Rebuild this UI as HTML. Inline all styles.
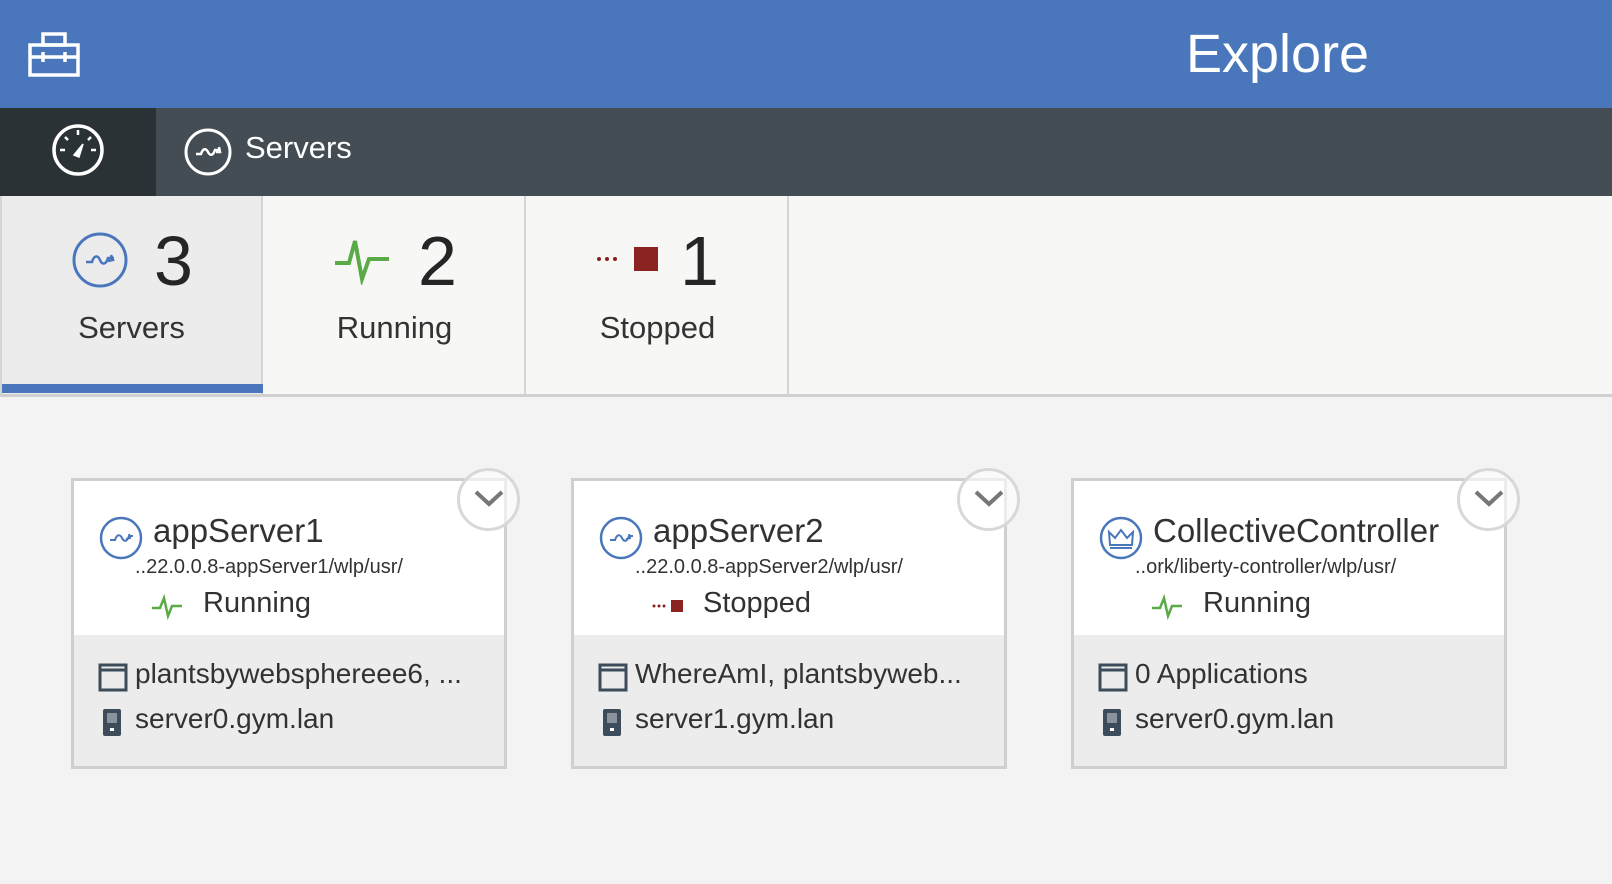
<!DOCTYPE html>
<html><head><meta charset="utf-8"><style>
*{margin:0;padding:0;box-sizing:border-box}
body{width:1612px;height:884px;overflow:hidden;background:#f3f3f3;font-family:"Liberation Sans",sans-serif;color:#323232;position:relative}
.abs{position:absolute}
.hdr{left:0;top:0;width:1612px;height:108px;background:#4a77bb}
.nav{left:0;top:108px;width:1612px;height:88px;background:#434d53}
.navl{left:0;top:108px;width:156px;height:88px;background:#2b3236}
.tabs{left:0;top:196px;width:1612px;height:201px;background:#f7f7f5;border-bottom:3px solid #d0d0d0}
.tab{top:196px;height:198px;width:263px;border-right:2px solid #d5d5d5}
.num{font-size:70px;line-height:1;color:#252525}
.lbl{font-size:31px;width:263px;text-align:center;color:#333}
.card{width:436px;height:291px;border:3px solid #cfcfcf;background:#ececec}
.card .top{position:absolute;left:0;top:0;width:430px;height:154px;background:#fff}
.t{position:absolute;white-space:nowrap}
</style></head><body>
<div class="abs hdr"></div>
<svg class="abs" style="left:28px;top:32px" width="52" height="45" viewBox="0 0 52 45" fill="none" stroke="#fff" stroke-width="3.5"><rect x="2" y="13" width="48" height="30"/><rect x="15" y="2" width="22" height="11"/><line x1="2" y1="25" x2="50" y2="25"/><line x1="15" y1="20" x2="15" y2="30"/><line x1="37" y1="20" x2="37" y2="30"/></svg>
<div class="t" style="left:1186px;top:25px;font-size:54px;color:#fff;line-height:1.1">Explore</div>
<div class="abs nav"></div><div class="abs navl"></div>
<svg class="abs" style="left:50px;top:122px" width="56" height="56" viewBox="0 0 56 56" fill="none" stroke="#fff" stroke-width="3.5"><circle cx="28" cy="28" r="24"/><path d="M28 8v5M10 28h5M41 28h5M15 15l3 3M41 15l-3 3" stroke-width="2.5"/><path d="M24 33l9-11-4 13z" fill="#fff" stroke-width="1.5"/></svg>
<svg class="abs" style="left:183px;top:127px" width="50" height="50" viewBox="0 0 50 50" fill="none" stroke="#fff" stroke-width="3"><circle cx="25" cy="25" r="22"/><path d="M13 27h5c2-6 5-6 7-2s5 4 7-2h5M36 20l1 5-4 0" stroke-width="2.5"/></svg>
<div class="t" style="left:245px;top:130px;font-size:31px;color:#fff">Servers</div>
<div class="abs tabs"></div>
<div class="abs tab" style="left:0;background:#ececec;border-left:2px solid #d5d5d5"></div>
<div class="abs" style="left:2px;top:384px;width:261px;height:9px;background:#4a77bb"></div>
<div class="abs tab" style="left:263px"></div>
<div class="abs tab" style="left:526px"></div>
<svg class="abs" style="left:71px;top:231px" width="58" height="58" viewBox="0 0 58 58" fill="none" stroke="#4a77bb" stroke-width="3"><circle cx="29" cy="29" r="26"/><path d="M15 31h6c2-7 6-7 8-2s6 5 8-2h6M40 24l2 5-5 1" stroke-width="2.5"/></svg>
<div class="t num" style="left:154px;top:226px">3</div>
<div class="t lbl" style="left:0;top:310px">Servers</div>
<svg class="abs" style="left:335px;top:237px" width="56" height="48" viewBox="0 0 56 48" fill="none" stroke="#5aab47" stroke-width="4"><path d="M0 26h14l6-22 7 38 7-20h20"/></svg>
<div class="t num" style="left:418px;top:226px">2</div>
<div class="t lbl" style="left:263px;top:310px">Running</div>
<svg class="abs" style="left:596px;top:246px" width="64" height="26"><circle cx="3" cy="13" r="2" fill="#8b1f1f"/><circle cx="11" cy="13" r="2" fill="#8b1f1f"/><circle cx="19" cy="13" r="2" fill="#8b1f1f"/><rect x="38" y="1" width="24" height="24" fill="#8b2323"/></svg>
<div class="t num" style="left:680px;top:226px">1</div>
<div class="t lbl" style="left:526px;top:310px">Stopped</div>

<div class="abs card" style="left:71px;top:478px"><div class="top"></div>
<svg class="t" style="left:24px;top:34px" width="46" height="46" viewBox="0 0 46 46" fill="none" stroke="#4a77bb" stroke-width="2.5"><circle cx="23" cy="23" r="20"/><path d="M12 25h5c2-6 5-6 7-2s5 4 7-2h4M31 19l1 4-4 1" stroke-width="2"/></svg>
<div class="t" style="left:79px;top:31px;font-size:33px">appServer1</div>
<div class="t" style="left:61px;top:75px;font-size:20px">..22.0.0.8-appServer1/wlp/usr/</div>
<svg class="t" style="left:78px;top:113px" width="32" height="26" fill="none" stroke="#5aab47" stroke-width="2.5"><path d="M0 14h8l4-10 4 18 4-10h10"/></svg>
<div class="t" style="left:129px;top:106px;font-size:29px">Running</div>
<svg class="t" style="left:24px;top:181px" width="30" height="30" fill="none" stroke="#3d4c5a" stroke-width="3"><rect x="2" y="3" width="26" height="25"/><line x1="2" y1="8" x2="28" y2="8"/></svg>
<div class="t" style="left:61px;top:177px;font-size:28px">plantsbywebsphereee6, ...</div>
<svg class="t" style="left:29px;top:228px" width="18" height="27"><rect x="0" y="0" width="18" height="27" rx="2" fill="#3d4c5a"/><rect x="4" y="4" width="10" height="10" fill="#fff" opacity=".4"/><rect x="7" y="19" width="4" height="3" fill="#fff"/></svg>
<div class="t" style="left:61px;top:222px;font-size:28px">server0.gym.lan</div>
</div>
<div class="abs" style="left:457px;top:468px;width:63px;height:63px;border-radius:50%;border:3px solid #d8d8d8;background:rgba(255,255,255,.6)"></div>
<svg class="abs" style="left:474px;top:490px" width="30" height="18" fill="none" stroke="#777" stroke-width="4"><path d="M2 2l13 12 13-12"/></svg>

<div class="abs card" style="left:571px;top:478px"><div class="top"></div>
<svg class="t" style="left:24px;top:34px" width="46" height="46" viewBox="0 0 46 46" fill="none" stroke="#4a77bb" stroke-width="2.5"><circle cx="23" cy="23" r="20"/><path d="M12 25h5c2-6 5-6 7-2s5 4 7-2h4M31 19l1 4-4 1" stroke-width="2"/></svg>
<div class="t" style="left:79px;top:31px;font-size:33px">appServer2</div>
<div class="t" style="left:61px;top:75px;font-size:20px">..22.0.0.8-appServer2/wlp/usr/</div>
<svg class="t" style="left:78px;top:117px" width="32" height="16"><circle cx="2" cy="8" r="1.5" fill="#8b1f1f"/><circle cx="7" cy="8" r="1.5" fill="#8b1f1f"/><circle cx="12" cy="8" r="1.5" fill="#8b1f1f"/><rect x="19" y="2" width="12" height="12" fill="#8b2323"/></svg>
<div class="t" style="left:129px;top:106px;font-size:29px">Stopped</div>
<svg class="t" style="left:24px;top:181px" width="30" height="30" fill="none" stroke="#3d4c5a" stroke-width="3"><rect x="2" y="3" width="26" height="25"/><line x1="2" y1="8" x2="28" y2="8"/></svg>
<div class="t" style="left:61px;top:177px;font-size:28px">WhereAmI, plantsbyweb...</div>
<svg class="t" style="left:29px;top:228px" width="18" height="27"><rect x="0" y="0" width="18" height="27" rx="2" fill="#3d4c5a"/><rect x="4" y="4" width="10" height="10" fill="#fff" opacity=".4"/><rect x="7" y="19" width="4" height="3" fill="#fff"/></svg>
<div class="t" style="left:61px;top:222px;font-size:28px">server1.gym.lan</div>
</div>
<div class="abs" style="left:957px;top:468px;width:63px;height:63px;border-radius:50%;border:3px solid #d8d8d8;background:rgba(255,255,255,.6)"></div>
<svg class="abs" style="left:974px;top:490px" width="30" height="18" fill="none" stroke="#777" stroke-width="4"><path d="M2 2l13 12 13-12"/></svg>

<div class="abs card" style="left:1071px;top:478px"><div class="top"></div>
<svg class="t" style="left:24px;top:34px" width="46" height="46" viewBox="0 0 46 46" fill="none" stroke="#4a77bb" stroke-width="2.5"><circle cx="23" cy="23" r="20"/><path d="M12 30l-1-13 6 6 6-8 6 8 6-6-1 13zM12 33h22" stroke-width="2"/></svg>
<div class="t" style="left:79px;top:31px;font-size:33px">CollectiveController</div>
<div class="t" style="left:61px;top:75px;font-size:20px">..ork/liberty-controller/wlp/usr/</div>
<svg class="t" style="left:78px;top:113px" width="32" height="26" fill="none" stroke="#5aab47" stroke-width="2.5"><path d="M0 14h8l4-10 4 18 4-10h10"/></svg>
<div class="t" style="left:129px;top:106px;font-size:29px">Running</div>
<svg class="t" style="left:24px;top:181px" width="30" height="30" fill="none" stroke="#3d4c5a" stroke-width="3"><rect x="2" y="3" width="26" height="25"/><line x1="2" y1="8" x2="28" y2="8"/></svg>
<div class="t" style="left:61px;top:177px;font-size:28px">0 Applications</div>
<svg class="t" style="left:29px;top:228px" width="18" height="27"><rect x="0" y="0" width="18" height="27" rx="2" fill="#3d4c5a"/><rect x="4" y="4" width="10" height="10" fill="#fff" opacity=".4"/><rect x="7" y="19" width="4" height="3" fill="#fff"/></svg>
<div class="t" style="left:61px;top:222px;font-size:28px">server0.gym.lan</div>
</div>
<div class="abs" style="left:1457px;top:468px;width:63px;height:63px;border-radius:50%;border:3px solid #d8d8d8;background:rgba(255,255,255,.6)"></div>
<svg class="abs" style="left:1474px;top:490px" width="30" height="18" fill="none" stroke="#777" stroke-width="4"><path d="M2 2l13 12 13-12"/></svg>
</body></html>
